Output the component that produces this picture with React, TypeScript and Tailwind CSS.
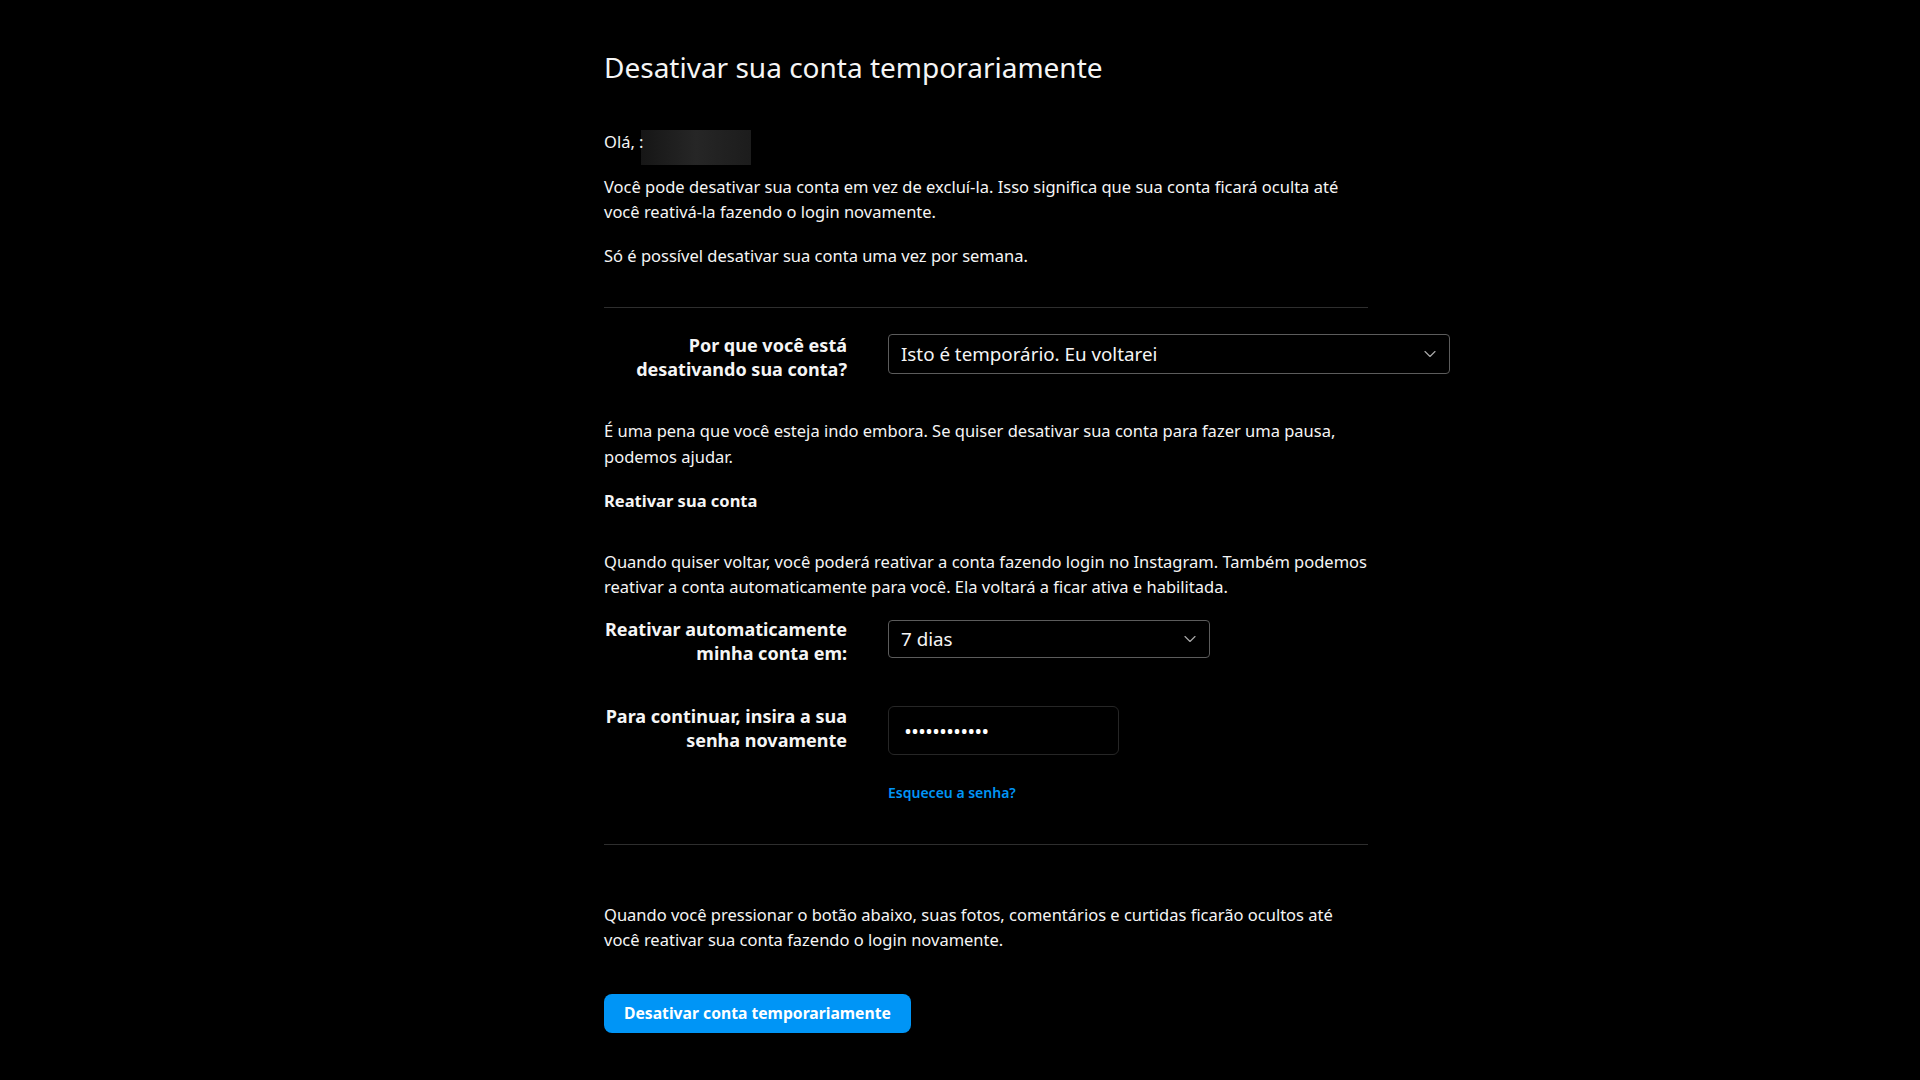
import { ChevronDown } from "lucide-react";

const font = { fontFamily: '"Segoe UI", "Noto Sans", "Liberation Sans", sans-serif' };

function FieldLabel({ children }: { children: React.ReactNode }) {
  return (
    <div className="w-[243px] shrink-0 text-right text-[18px] font-bold leading-[24px] whitespace-nowrap text-[#f5f5f5]">
      {children}
    </div>
  );
}

function Select({ value, width, height }: { value: string; width: string; height: string }) {
  return (
    <div
      className={`flex items-center justify-between rounded-[4px] border border-[#5c5c5c] bg-black pl-[12px] pr-[9px] ${width} ${height}`}
    >
      <span className="text-[18.8px] text-[#f5f5f5]">{value}</span>
      <ChevronDown className="h-[20px] w-[20px] text-[#a8a8a8]" strokeWidth={1.4} />
    </div>
  );
}

export default function App() {
  return (
    <div className="min-h-screen bg-black text-[#f5f5f5]" style={font}>
      <div className="ml-[604px] w-[764px] pt-[50px] pb-[40px]">
        <h1 className="text-[28px] font-normal leading-[34px] whitespace-nowrap">
          Desativar sua conta temporariamente
        </h1>

        <div className="mt-[46px] flex h-[35px] items-start text-[16.5px]">
          <span className="relative z-10 mt-[-1px] leading-[25px]">Olá, :</span>
          <div className="-ml-[3px] h-[35px] w-[110px] bg-gradient-to-r from-[#161616] via-[#262626] to-[#1c1c1c]" />
        </div>

        <p className="mt-[9px] text-[16.5px] leading-[25px] whitespace-nowrap">
          Você pode desativar sua conta em vez de excluí-la. Isso significa que sua conta ficará oculta até
          <br />
          você reativá-la fazendo o login novamente.
        </p>
        <p className="mt-[19px] text-[16.5px] leading-[25px]">Só é possível desativar sua conta uma vez por semana.</p>

        <div className="mt-[39px] h-px bg-[#2e2e2e]" />

        <div className="mt-[25px] flex items-start gap-[41px]">
          <FieldLabel>
            Por que você está
            <br />
            desativando sua conta?
          </FieldLabel>
          <div className="mt-[1px]">
            <Select value="Isto é temporário. Eu voltarei" width="w-[562px]" height="h-[40px]" />
          </div>
        </div>

        <p className="mt-[37px] text-[16.5px] leading-[25.5px] whitespace-nowrap">
          É uma pena que você esteja indo embora. Se quiser desativar sua conta para fazer uma pausa,
          <br />
          podemos ajudar.
        </p>

        <h2 className="mt-[19px] text-[16.5px] font-bold leading-[25px]">Reativar sua conta</h2>

        <p className="mt-[36px] text-[16.5px] leading-[25px] whitespace-nowrap">
          Quando quiser voltar, você poderá reativar a conta fazendo login no Instagram. Também podemos
          <br />
          reativar a conta automaticamente para você. Ela voltará a ficar ativa e habilitada.
        </p>

        <div className="mt-[18px] flex items-start gap-[41px]">
          <FieldLabel>
            Reativar automaticamente
            <br />
            minha conta em:
          </FieldLabel>
          <div className="mt-[3px]">
            <Select value="7 dias" width="w-[322px]" height="h-[38px]" />
          </div>
        </div>

        <div className="mt-[39px] flex items-start gap-[41px]">
          <FieldLabel>
            Para continuar, insira a sua
            <br />
            senha novamente
          </FieldLabel>
          <div className="mt-[2px] flex h-[49px] w-[231px] items-center rounded-[6px] border border-[#262626] bg-black pl-[16px]">
            <span className="text-[16px] font-bold tracking-[1px] text-white">••••••••••••</span>
          </div>
        </div>

        <a className="mt-[28px] ml-[284px] block text-[14px] font-semibold leading-[20px] text-[#0095f6]" href="#">
          Esqueceu a senha?
        </a>

        <div className="mt-[41px] h-px bg-[#2e2e2e]" />

        <p className="mt-[58px] text-[16.5px] leading-[24.5px] whitespace-nowrap">
          Quando você pressionar o botão abaixo, suas fotos, comentários e curtidas ficarão ocultos até
          <br />
          você reativar sua conta fazendo o login novamente.
        </p>

        <button className="mt-[42px] h-[39px] rounded-[8px] bg-[#0095f6] px-[20px] text-[15.7px] font-bold text-white">
          Desativar conta temporariamente
        </button>
      </div>
    </div>
  );
}
